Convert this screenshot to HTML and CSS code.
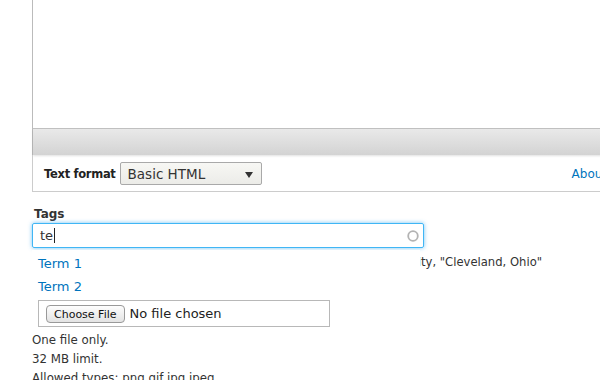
FILE: index.html
```html
<!DOCTYPE html>
<html>
<head>
<meta charset="utf-8">
<link rel="stylesheet" href="styles.css">
</head>
<body>
<div class="page">
  <div class="editor">
    <div class="editor-area"></div>
    <div class="toolbar"></div>
  </div>
  <div class="format-row">
    <span class="format-label">Text format</span>
    <div class="select"><span>Basic HTML</span><span class="arrow"></span></div>
    <a class="about" href="#">About text formats</a>
  </div>

  <div class="tags">
    <div class="tags-label">Tags</div>
    <div class="input-wrap">
      <div class="input"><span class="typed">te</span><span class="caret"></span>
        <svg class="throbber" width="12" height="12" viewBox="0 0 12 12"><circle cx="6" cy="6" r="4.8" fill="none" stroke="#b3b3b3" stroke-width="1.8"/></svg>
      </div>
      <ul class="menu">
        <li><a href="#">Term 1</a></li>
        <li><a href="#">Term 2</a></li>
      </ul>
    </div>
    <div class="desc">Enter a comma-separated list. For example: Amsterdam, Mexico City, "Cleveland, Ohio"</div>
  </div>

  <div class="file">
    <div class="file-box"><span class="btn">Choose File</span><span class="nofile">No file chosen</span></div>
  </div>
  <div class="help">
    <div>One file only.</div>
    <div>32 MB limit.</div>
    <div>Allowed types: png gif jpg jpeg.</div>
  </div>
</div>
</body>
</html>
```
FILE: styles.css
```css
html, body {
  margin: 0;
  padding: 0;
  background: #fff;
  overflow: hidden;
}
body {
  font-family: "DejaVu Sans", "Lucida Grande", sans-serif;
  color: #333;
  width: 600px;
  height: 380px;
}
.page {
  padding-left: 32px;
}
.editor {
  width: 640px;
  border-left: 1px solid #bbb;
}
.editor-area {
  height: 128px;
  border-bottom: 1px solid #c2c2c2;
}
.toolbar {
  height: 26px;
  background: linear-gradient(#e9e9e9, #d3d3d3);
  box-shadow: 0 1px 2px rgba(0,0,0,0.12);
}
.format-row {
  width: 640px;
  height: 37px;
  border-left: 1px solid #ccc;
  border-bottom: 1px solid #ccc;
  display: flex;
  align-items: center;
  box-sizing: border-box;
  padding-left: 11px;
  padding-top: 1px;
}
.format-row > * {
  flex-shrink: 0;
}
.format-label {
  font-weight: bold;
  font-size: 11.5px;
  letter-spacing: -0.3px;
  color: #222;
  white-space: nowrap;
}
.select {
  margin-left: 4px;
  width: 142px;
  height: 23px;
  box-sizing: border-box;
  border: 1px solid #a9a9a9;
  border-radius: 2px;
  background: linear-gradient(#f7f7f4, #ecece8);
  display: flex;
  align-items: center;
  justify-content: space-between;
  padding: 0 8px 0 7px;
  font-size: 13.5px;
  color: #333;
}
.arrow {
  width: 0;
  height: 0;
  border-left: 4px solid transparent;
  border-right: 4px solid transparent;
  border-top: 6px solid #333;
  margin-top: 2px;
}
.about {
  margin-left: 310px;
  font-size: 12px;
  color: #0074bd;
  text-decoration: none;
  white-space: nowrap;
}
.tags {
  margin-top: 15px;
}
.tags-label {
  font-weight: bold;
  font-size: 12px;
  color: #333;
  padding-left: 2px;
  height: 16px;
}
.input-wrap {
  position: relative;
  width: 392px;
}
.input {
  height: 25px;
  box-sizing: border-box;
  border: 1px solid #40b6f5;
  border-radius: 2px;
  box-shadow: 0 0 4px rgba(60,170,240,0.7);
  display: flex;
  align-items: center;
  padding-left: 7px;
  font-size: 13px;
  color: #333;
  position: relative;
}
.caret {
  display: inline-block;
  width: 1px;
  height: 15px;
  background: #222;
  margin-left: 1px;
}
.throbber {
  position: absolute;
  right: 4px;
  top: 6px;
}
.menu {
  position: absolute;
  left: 0;
  top: 27px;
  width: 388px;
  margin: 0;
  padding: 1px 0 0;
  list-style: none;
  background: #fff;
  z-index: 2;
}
.menu li {
  height: 23px;
  line-height: 23px;
  padding-left: 6px;
}
.menu a {
  color: #0074bd;
  text-decoration: none;
  font-size: 13px;
}
.desc {
  font-size: 11.6px;
  color: #333;
  margin-top: 7px;
  height: 45px;
  white-space: nowrap;
}
.file {
  padding-left: 6px;
}
.file-box {
  width: 292px;
  height: 27px;
  box-sizing: border-box;
  border: 1px solid #b8b8b8;
  display: flex;
  align-items: center;
  padding-left: 7px;
}
.btn {
  display: inline-block;
  height: 18px;
  line-height: 17px;
  box-sizing: border-box;
  padding: 0 7px;
  border: 1px solid #999;
  border-radius: 4px;
  background: linear-gradient(#fdfdfd, #e3e3e3);
  font-size: 11px;
  color: #111;
}
.nofile {
  margin-left: 5px;
  font-size: 13px;
  color: #222;
}
.help {
  font-size: 11.8px;
  color: #333;
  margin-top: 4px;
}
.help div {
  height: 19px;
  line-height: 19px;
}
```
